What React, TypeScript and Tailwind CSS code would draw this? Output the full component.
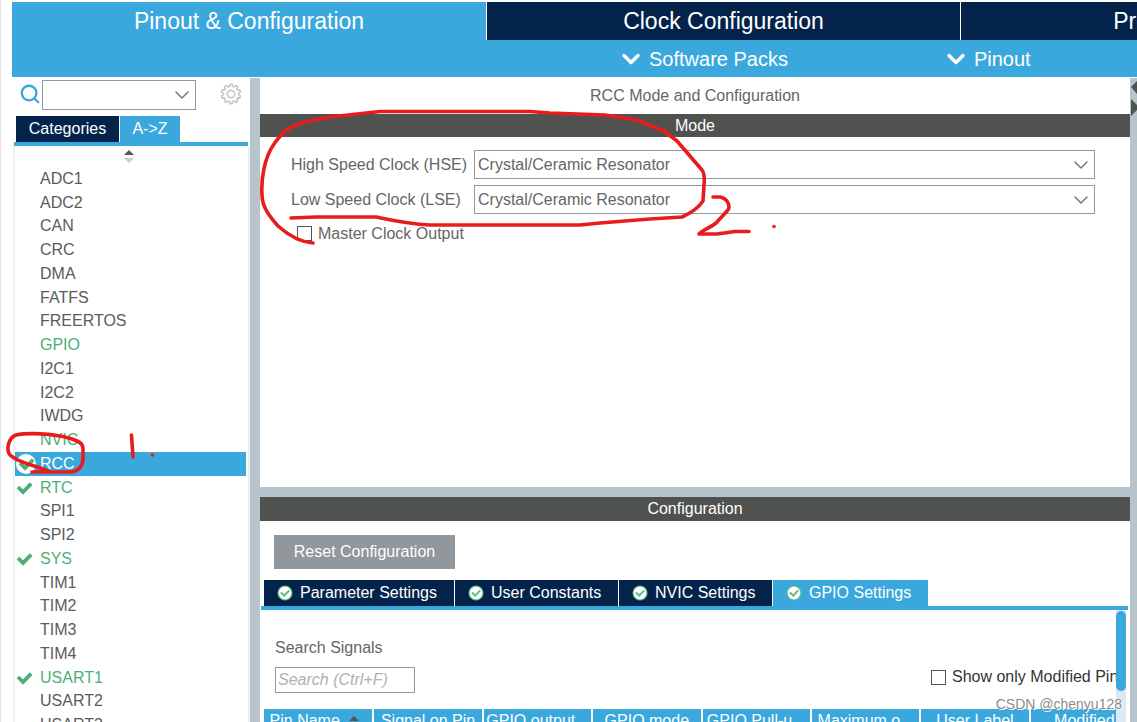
import { ChevronDown, Search } from 'lucide-react';

type Peripheral = { name: string; state?: 'used' | 'enabled' | 'selected' };

const peripherals: Peripheral[] = [
    { name: 'ADC1' },
    { name: 'ADC2' },
    { name: 'CAN' },
    { name: 'CRC' },
    { name: 'DMA' },
    { name: 'FATFS' },
    { name: 'FREERTOS' },
    { name: 'GPIO', state: 'used' },
    { name: 'I2C1' },
    { name: 'I2C2' },
    { name: 'IWDG' },
    { name: 'NVIC', state: 'used' },
    { name: 'RCC', state: 'selected' },
    { name: 'RTC', state: 'enabled' },
    { name: 'SPI1' },
    { name: 'SPI2' },
    { name: 'SYS', state: 'enabled' },
    { name: 'TIM1' },
    { name: 'TIM2' },
    { name: 'TIM3' },
    { name: 'TIM4' },
    { name: 'USART1', state: 'enabled' },
    { name: 'USART2' },
    { name: 'USART3' },
];

const settingsTabs = [
    { name: 'Parameter Settings', style: 'w-[190px] bg-[#03234b]' },
    { name: 'User Constants', style: 'w-[163px] bg-[#03234b]' },
    { name: 'NVIC Settings', style: 'w-[153px] bg-[#03234b]' },
    { name: 'GPIO Settings', style: 'w-[155px] bg-[#3aa8dc]' },
];

const columns = [
    'Pin Name',
    'Signal on Pin',
    'GPIO output...',
    'GPIO mode',
    'GPIO Pull-u...',
    'Maximum o...',
    'User Label',
    'Modified',
];

// Outline of a ten-tooth wheel centred in a 24x24 box
const gearPath = Array.from({ length: 10 }, (_, i) => {
    const point = (deg: number, r: number) => {
        const a = ((i * 36 + deg - 90) * Math.PI) / 180;
        return `${(12 + r * Math.cos(a)).toFixed(2)} ${(12 + r * Math.sin(a)).toFixed(2)}`;
    };
    return `${i === 0 ? 'M' : 'L'}${point(-12, 8.4)} L${point(-7, 10.6)} L${point(7, 10.6)} L${point(12, 8.4)}`;
}).join(' ') + 'Z';

function GearIcon() {
    return (
        <svg width="22" height="22" viewBox="0 0 24 24" fill="none" stroke="#c8c8c8" strokeWidth="1.8" strokeLinejoin="round">
            <path d={gearPath} />
            <circle cx="12" cy="12" r="4" />
        </svg>
    );
}

function EnabledMark() {
    return (
        <svg width="17" height="14" viewBox="0 0 17 14" fill="none" stroke="#4cb074" strokeWidth="3.8">
            <path d="M2 6 L7 11 L15.2 2.6" />
        </svg>
    );
}

function TabCheck() {
    return (
        <svg width="16" height="16" viewBox="0 0 16 16" fill="none">
            <circle cx="8" cy="8" r="7" fill="#fff" stroke="#5cb884" strokeWidth="1.2" />
            <path d="M3.8 7.4 L7.3 10.6 L12.2 5.4" stroke="#62bb86" strokeWidth="2" />
        </svg>
    );
}

function ModeSelect({ id, label }: { id: string; label: string }) {
    return (
        <div className="flex h-[29px] items-center">
            <label htmlFor={id} className="w-[183px] shrink-0 whitespace-nowrap">
                {label}
            </label>
            <div className="relative flex-1">
                <select
                    id={id}
                    className="block h-[29px] w-full appearance-none border border-[#9299a0] bg-white pl-[3px] outline-none"
                >
                    <option>Crystal/Ceramic Resonator</option>
                    <option>Disable</option>
                </select>
                <ChevronDown size={24} strokeWidth={1.5} className="pointer-events-none absolute right-[2px] top-[3px] text-[#777]" />
            </div>
        </div>
    );
}

function Header() {
    return (
        <header className="ml-3 shrink-0 overflow-hidden bg-[#3aa8dc] text-white">
            <div className="flex h-[38px] text-[23px] leading-[38px]">
                <button className="w-[474px] shrink-0 bg-[#3aa8dc]">Pinout &amp; Configuration</button>
                <button className="w-[474px] shrink-0 border-l border-white bg-[#03234b]">Clock Configuration</button>
                <button className="w-[474px] shrink-0 border-l border-white bg-[#03234b]">Project Manager</button>
            </div>
            <div className="flex h-[37px] items-center gap-[154px] pl-[605px] text-[20px]">
                <button className="flex items-center gap-1 whitespace-nowrap">
                    <ChevronDown size={28} strokeWidth={3} />
                    Software Packs
                </button>
                <button className="flex items-center gap-1">
                    <ChevronDown size={28} strokeWidth={3} />
                    Pinout
                </button>
            </div>
        </header>
    );
}

function Sidebar() {
    return (
        <aside className="ml-3 flex w-[238px] shrink-0 flex-col overflow-hidden">
            <div className="flex h-[38px] shrink-0 items-start pt-[2px]">
                <label htmlFor="find" aria-label="Find" className="flex h-[28px] w-[30px] items-center pl-[7px]">
                    <Search size={22} strokeWidth={2.5} className="text-[#3aa8dc]" />
                </label>
                <div className="relative w-[154px]">
                    <select id="find" className="block h-[30px] w-full appearance-none border border-[#9299a0] bg-white outline-none">
                        <option></option>
                    </select>
                    <ChevronDown size={24} strokeWidth={1.5} className="pointer-events-none absolute right-[2px] top-[3px] text-[#777]" />
                </div>
                <button aria-label="Options" className="ml-6 mt-[3px]">
                    <GearIcon />
                </button>
            </div>
            <div className="ml-1 flex h-[26px] shrink-0 gap-px text-white">
                <button className="w-[103px] bg-[#03234b]">Categories</button>
                <button className="w-[60px] bg-[#3aa8dc]">A-&gt;Z</button>
            </div>
            <div className="ml-[2px] mr-[2px] h-1 shrink-0 bg-[#3aa8dc]" />
            <div className="ml-[1px] flex-1 overflow-hidden border-x-2 border-[#eef0f4]">
                <div className="flex h-[21px] flex-col items-center pt-1">
                    <button aria-label="Sort" className="mr-[6px]">
                        <svg width="12" height="14" viewBox="0 0 12 14">
                            <path d="M6 0 L11 5 H1Z" fill="#555" />
                            <path d="M6 13 L11 8 H1Z" fill="#ccc" />
                        </svg>
                    </button>
                </div>
                <ul className="mr-[2px] grid h-[570px] auto-rows-fr">
                    {peripherals.map(({ name, state }) => (
                        <li
                            key={name}
                            className={
                                state === 'selected'
                                    ? 'flex items-center bg-[#3aa8dc] text-white'
                                    : state
                                      ? 'flex items-center text-[#4cb074]'
                                      : 'flex items-center text-[#5b5b5b]'
                            }
                        >
                            <span className="flex w-[25px] items-center pl-[1px]">
                                {state === 'enabled' && <EnabledMark />}
                                {state === 'selected' && (
                                    <span className="flex size-5 items-center justify-center rounded-full bg-white">
                                        <EnabledMark />
                                    </span>
                                )}
                            </span>
                            {name}
                        </li>
                    ))}
                </ul>
            </div>
        </aside>
    );
}

function ModePanel() {
    return (
        <section className="h-[409px] shrink-0 bg-white">
            <h1 className="h-[36px] text-center leading-[36px]">RCC Mode and Configuration</h1>
            <h2 className="h-[23px] bg-[#505250] text-center leading-[23px] text-white">Mode</h2>
            <div className="flex flex-col gap-[6px] pl-[31px] pr-[35px] pt-[13px]">
                <ModeSelect id="hse" label="High Speed Clock (HSE)" />
                <ModeSelect id="lse" label="Low Speed Clock (LSE)" />
                <label className="flex h-[27px] items-center gap-[6px] pl-[6px]">
                    <input type="checkbox" className="size-[15px] appearance-none border border-[#555] bg-white" />
                    Master Clock Output
                </label>
            </div>
        </section>
    );
}

function ConfigurationPanel() {
    return (
        <section className="flex min-h-0 flex-1 flex-col overflow-hidden bg-white">
            <h2 className="h-6 shrink-0 bg-[#505250] text-center leading-6 text-white">Configuration</h2>
            <button className="ml-[14px] mt-[14px] h-[34px] w-[181px] shrink-0 bg-[#90979d] text-white">Reset Configuration</button>
            <div className="ml-1 mt-[11px] flex h-[26px] shrink-0 gap-px text-white">
                {settingsTabs.map(({ name, style }) => (
                    <button key={name} className={`flex items-center gap-[7px] whitespace-nowrap pl-[13px] ${style}`}>
                        <TabCheck />
                        {name}
                    </button>
                ))}
            </div>
            <div className="ml-px mr-[2px] h-1 shrink-0 bg-[#3aa8dc]" />
            <div className="mr-1 flex min-h-0 flex-1">
                <div className="min-w-0 flex-1 overflow-hidden pt-[26px]">
                    <div className="flex h-[73px] items-end justify-between pl-[15px]">
                        <div className="flex h-full flex-col">
                            <label htmlFor="signals" className="h-[31px] leading-[24px]">
                                Search Signals
                            </label>
                            <input
                                id="signals"
                                placeholder="Search (Ctrl+F)"
                                className="h-[26px] w-[140px] border border-[#9299a0] pl-[2px] outline-none placeholder:italic placeholder:text-[#b0b0b0]"
                            />
                        </div>
                        <label className="flex h-full w-[185px] items-center gap-[6px] overflow-hidden whitespace-nowrap pt-[9px] text-[#333]">
                            <input type="checkbox" className="size-[15px] shrink-0 appearance-none border border-[#555] bg-white" />
                            Show only Modified Pins
                        </label>
                    </div>
                    <table className="ml-1 w-[876px] table-fixed border-collapse text-white">
                        <thead>
                            <tr>
                                {columns.map((column) => (
                                    <th key={column} className="h-6 whitespace-nowrap border-r-2 border-white bg-[#3aa8dc] p-0 font-normal leading-6">
                                        {column}
                                        {column === 'Pin Name' && (
                                            <svg width="10" height="5" viewBox="0 0 10 5" className="mb-[6px] ml-[9px] mr-2 inline">
                                                <path d="M5 0 L10 5 H0Z" fill="#555" />
                                            </svg>
                                        )}
                                    </th>
                                ))}
                            </tr>
                        </thead>
                    </table>
                </div>
                <div className="w-[10px] bg-[#dbe8f5]">
                    <div className="mt-px h-[80px] rounded-full bg-[#3aa8dc]" />
                </div>
            </div>
        </section>
    );
}

// Red pen marks drawn over the window
function PenMarks() {
    return (
        <svg
            className="pointer-events-none absolute left-0 top-0"
            width="1137"
            height="722"
            viewBox="0 0 1137 722"
            fill="none"
            stroke="#e81c1c"
            strokeWidth="3.6"
            strokeLinecap="round"
            strokeLinejoin="round"
        >
            <path d="M313 243 C300 242 288 235 278 226 C270 217 262 207 262 195 C261 180 264 158 274 144 C284 130 290 126 305 122 L330 117 L380 111.5 H530 L550 113 L605 115 L637 120 L664 131 L677 141 L702 170 Q705 174 704 185 L703 201 Q696 211 682 217 L650 219 L600 223 L580 225 H430 C408 224 395 221 376 217 H316 L291 218" />
            <path d="M713 197 H720 C729 199 730 207 728 210 L716 223 C710 228 702 230 699 234 H717 L735 231.5 H749" />
            <path d="M32 472 H72 C81 470 83 463 83 458 V448 C83 442 75 439 60 436 C45 433 25 433 16 435 C8 438 6 450 10 455 C18 463 35 465 48 471" />
            <path d="M131.5 435 L133 457" />
            <circle cx="152.5" cy="455" r="1.8" fill="#e81c1c" stroke="none" />
            <circle cx="774" cy="226.5" r="1.8" fill="#e81c1c" stroke="none" />
        </svg>
    );
}

export default function App() {
    return (
        <div className="relative flex h-screen flex-col overflow-hidden bg-white pt-[2px] font-['Liberation_Sans',Arial,sans-serif] text-base text-[#666] shadow-[inset_1px_0_0_#e2e2e2]">
            <Header />
            <div className="flex min-h-0 flex-1 pt-px">
                <Sidebar />
                <main className="flex min-w-0 flex-1 flex-col gap-[10px] border-l-[10px] border-[#b8c4cb] bg-[#b8c4cb]">
                    <ModePanel />
                    <ConfigurationPanel />
                </main>
                <div className="w-[7px] shrink-0 bg-[#b8c4cb]">
                    <svg width="7" height="40" viewBox="0 0 7 40" fill="#505250">
                        <path d="M1 9 L7 3 V16Z" />
                        <path d="M1 21 V38 L7 32 V27Z" />
                    </svg>
                </div>
            </div>
            <PenMarks />
            <p className="pointer-events-none absolute bottom-2 right-[15px] text-sm leading-5 text-[#8c8c8c] [text-shadow:1px_1px_0_#fff]">
                CSDN @chenyu128
            </p>
        </div>
    );
}
